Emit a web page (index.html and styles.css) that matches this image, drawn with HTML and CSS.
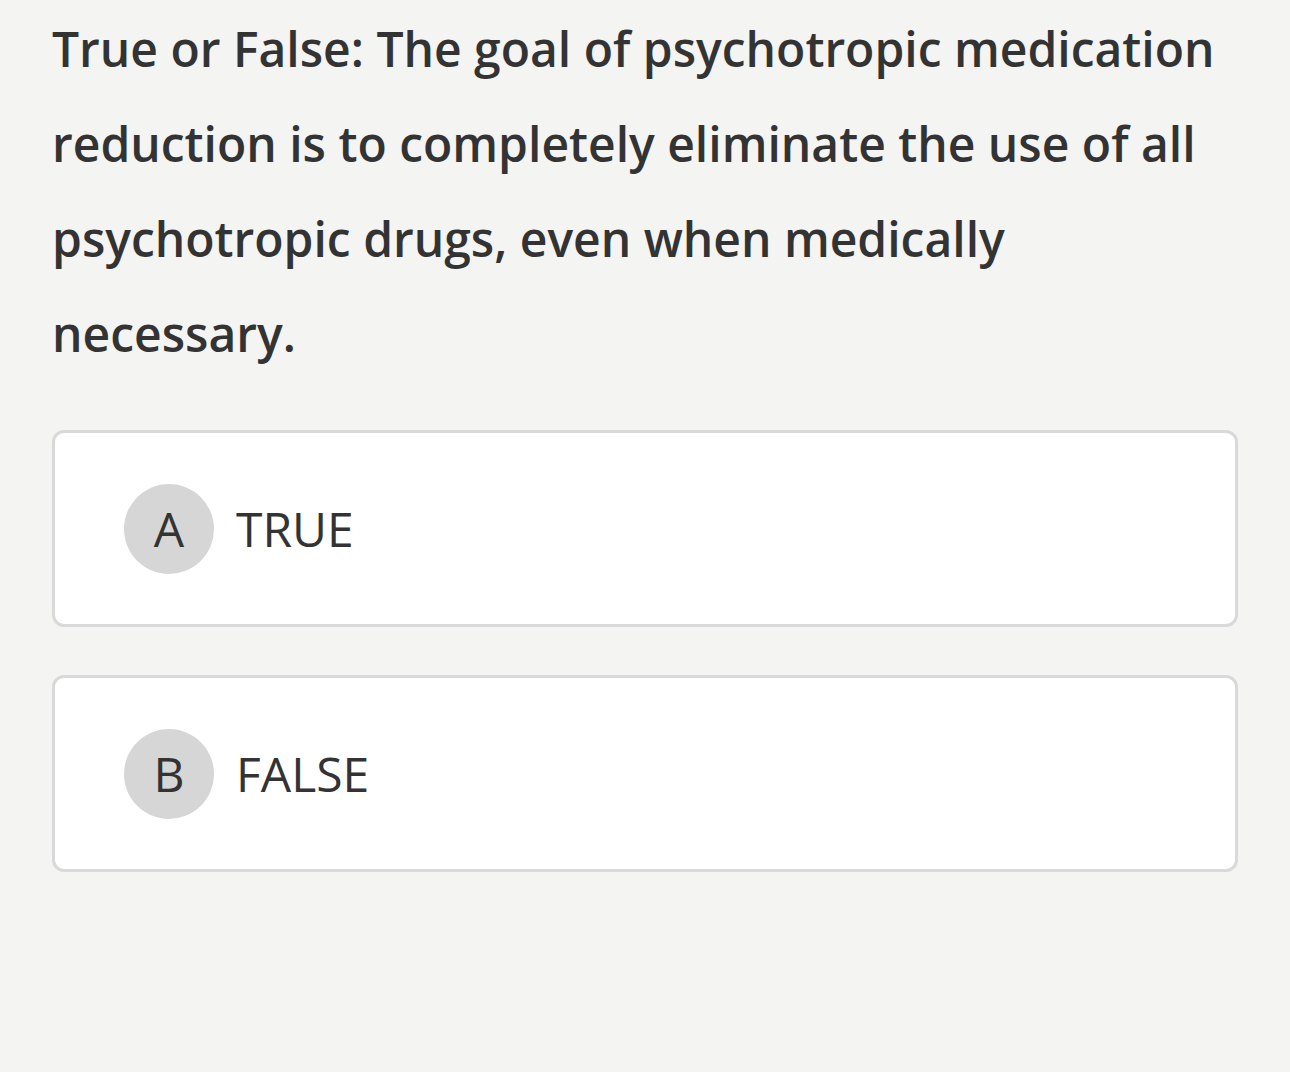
FILE: index.html
```html
<!DOCTYPE html>
<html>
<head>
<meta charset="utf-8">
<link rel="stylesheet" href="styles.css">
</head>
<body>
<main class="quiz">
  <p class="question">True or False: The goal of psychotropic medication reduction is to completely eliminate the use of all psychotropic drugs, even when medically necessary.</p>
  <div class="options">
    <div class="option">
      <span class="badge">A</span>
      <span class="label">TRUE</span>
    </div>
    <div class="option">
      <span class="badge">B</span>
      <span class="label">FALSE</span>
    </div>
  </div>
</main>
</body>
</html>
```
FILE: styles.css
```css
html, body {
  margin: 0;
  padding: 0;
  background: #f4f4f3;
}
body {
  font-family: "Open Sans", "Liberation Sans", sans-serif;
  color: #333333;
}
.quiz {
  padding: 1px 52px 0 52px;
  width: 1186px;
}
.question {
  margin: 0;
  font-size: 48px;
  font-weight: 600;
  line-height: 95px;
}
.options {
  margin-top: 49px;
  display: flex;
  flex-direction: column;
  gap: 48px;
}
.option {
  background: #ffffff;
  border: 3px solid #d9d9d9;
  border-radius: 12px;
  height: 197px;
  box-sizing: border-box;
  display: flex;
  align-items: center;
  padding-left: 69px;
}
.badge {
  width: 90px;
  height: 90px;
  border-radius: 50%;
  background: #d6d6d6;
  display: flex;
  align-items: center;
  justify-content: center;
  font-size: 48px;
  font-weight: 400;
  flex-shrink: 0;
}
.label {
  margin-left: 22px;
  font-size: 48px;
  font-weight: 400;
}
```
